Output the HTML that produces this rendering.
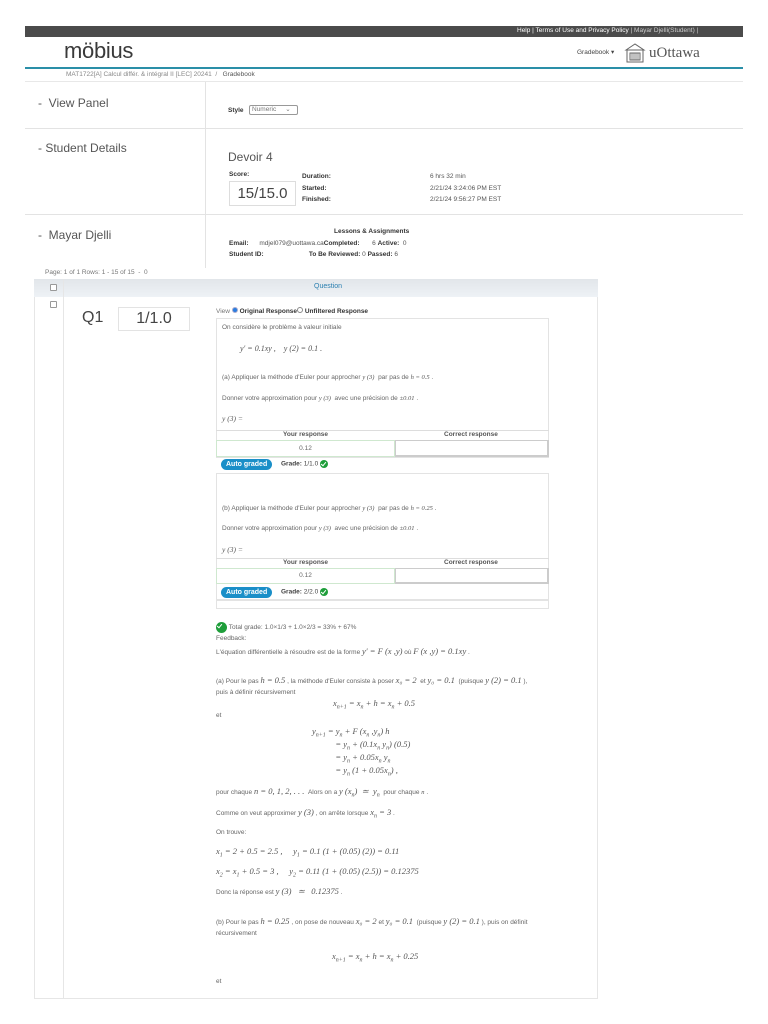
<!DOCTYPE html>
<html><head><meta charset="utf-8">
<style>
*{margin:0;padding:0;box-sizing:border-box}
body{width:768px;height:1024px;background:#fff;font-family:"Liberation Sans",sans-serif;color:#444;position:relative;overflow:hidden}
sub{line-height:0;font-size:70%}
.a{position:absolute;white-space:nowrap}
.s{font-size:6.5px;color:#555}
.b{font-weight:bold;color:#333}
.m{font-family:"Liberation Serif",serif;font-style:italic;color:#555}
.pill{position:absolute;background:#1a8fc8;color:#fff;font-size:7px;font-weight:bold;border-radius:6px;padding:1px 5px;height:11px;line-height:9px}
.chk{display:inline-block;width:8px;height:8px;border-radius:50%;background:#1e9e3a;vertical-align:middle;position:relative}
.chk:after{content:"";position:absolute;left:2.3px;top:1.2px;width:2px;height:4px;border:solid #fff;border-width:0 1.3px 1.3px 0;transform:rotate(40deg)}
.box{position:absolute;border:1px solid #e3e3e3}
.cb{position:absolute;width:7px;height:7px;border:1px solid #999;border-radius:1px;background:#fff}
</style></head><body>
<div class="a" style="left:25px;top:26px;width:718px;height:11px;background:#4b4b4b"></div>
<div class="a" style="left:517px;top:27px;font-size:6.5px;color:#fff">Help | Terms of Use and Privacy Policy <span style="color:#ccc">| Mayar Djelli(Student) |</span></div>
<div class="a" style="left:64px;top:38px;font-size:22px;color:#3a3a3a;letter-spacing:-0.3px">möbius</div>
<div class="a" style="left:577px;top:48px;font-size:6.5px;color:#444">Gradebook ▾</div>
<svg class="a" style="left:624px;top:42px" width="22" height="22" viewBox="0 0 22 22"><path d="M2 8 L11 2 L20 8 Z M3 8 H19 V20 H3 Z" fill="none" stroke="#666" stroke-width="1"/><rect x="6" y="11" width="10" height="7" fill="none" stroke="#666"/><path d="M8 11V18M10 11V18M12 11V18M14 11V18" stroke="#666" stroke-width=".8"/></svg>
<div class="a" style="left:649px;top:45px;font-size:15px;font-family:'Liberation Serif',serif;color:#555">uOttawa</div>
<div class="a" style="left:25px;top:67px;width:718px;height:2px;background:#2a8fa8"></div>
<div class="a s" style="left:66px;top:71px;color:#888">MAT1722[A] Calcul différ. &amp; intégral II [LEC] 20241 &nbsp;/ &nbsp; <span style="color:#555">Gradebook</span></div>
<div class="a" style="left:25px;top:81px;width:718px;height:1px;background:#e8e8e8"></div>
<div class="a" style="left:205px;top:82px;width:1px;height:186px;background:#e3e3e3"></div>
<div class="a" style="left:25px;top:128px;width:718px;height:1px;background:#e3e3e3"></div>
<div class="a" style="left:25px;top:214px;width:718px;height:1px;background:#e3e3e3"></div>
<div class="a" style="left:38px;top:96px;font-size:12px;color:#555">- &nbsp;View Panel</div>
<div class="a" style="left:38px;top:141px;font-size:12px;color:#555">- Student Details</div>
<div class="a" style="left:38px;top:228px;font-size:12px;color:#555">- &nbsp;Mayar Djelli</div>
<div class="a s b" style="left:228px;top:107px">Style</div>
<div class="a s" style="left:249px;top:105px;width:49px;height:10px;border:1px solid #999;border-radius:2px;padding-left:2px;line-height:8px;color:#777">Numeric &nbsp;&nbsp;&nbsp; ⌄</div>
<div class="a" style="left:228px;top:150px;font-size:12px;color:#555">Devoir 4</div>
<div class="a s b" style="left:229px;top:171px">Score:</div>
<div class="a" style="left:229px;top:181px;width:67px;height:25px;border:1px solid #ddd;font-size:15px;color:#444;text-align:center;line-height:23px">15/15.0</div>
<div class="a s b" style="left:302px;top:171px;line-height:11.5px">Duration:<br>Started:<br>Finished:</div>
<div class="a s" style="left:430px;top:171px;line-height:11.5px">6 hrs 32 min<br>2/21/24 3:24:06 PM EST<br>2/21/24 9:56:27 PM EST</div>
<div class="a s b" style="left:334px;top:228px">Lessons &amp; Assignments</div>
<div class="a s" style="left:229px;top:238px;line-height:11px"><b class="b">Email:</b> &nbsp;&nbsp;&nbsp;&nbsp; mdjel079@uottawa.ca<b class="b">Completed:</b> &nbsp;&nbsp;&nbsp;&nbsp;&nbsp;&nbsp;6 <b class="b">Active:</b> &nbsp;0<br><b class="b">Student ID:</b> &nbsp;&nbsp;&nbsp;&nbsp;&nbsp;&nbsp;&nbsp;&nbsp;&nbsp;&nbsp;&nbsp;&nbsp;&nbsp;&nbsp;&nbsp;&nbsp;&nbsp;&nbsp;&nbsp;&nbsp;&nbsp;&nbsp;&nbsp;&nbsp;<b class="b">To Be Reviewed:</b> 0 <b class="b">Passed:</b> 6</div>
<div class="a s" style="left:45px;top:269px;color:#777">Page: 1 of 1 Rows: 1 - 15 of 15 &nbsp;- &nbsp;0</div>
<div class="a" style="left:34px;top:279px;width:564px;height:720px;border:1px solid #e6e6e6;border-top:none"></div>
<div class="a" style="left:34px;top:279px;width:564px;height:18px;background:linear-gradient(#e2e6ea,#eef2f6)"></div>
<div class="a" style="left:63px;top:279px;width:1px;height:720px;background:#e6e6e6"></div>
<div class="a" style="left:314px;top:283px;font-size:7px;color:#2a7fb0">Question</div>
<div class="cb" style="left:50px;top:284px"></div>
<div class="cb" style="left:50px;top:301px"></div>
<div class="a" style="left:82px;top:309px;font-size:16px;color:#444">Q1</div>
<div class="a" style="left:118px;top:307px;width:72px;height:24px;border:1px solid #e3e3e3;font-size:16px;color:#444;text-align:center;line-height:22px">1/1.0</div>
<div class="a s" style="left:216px;top:307px;color:#777">View <span style="display:inline-block;width:6px;height:6px;border-radius:50%;background:#2a7de0;border:1px solid #aac"></span> <b class="b">Original Response</b><span style="display:inline-block;width:6px;height:6px;border-radius:50%;border:1px solid #888"></span> <b class="b">Unfiltered Response</b></div>
<div class="box" style="left:216px;top:318px;width:333px;height:140px"></div>
<div class="a s" style="left:222px;top:324px;color:#666">On considère le problème à valeur initiale</div>
<div class="a m" style="left:240px;top:344px;font-size:8px">y′ = 0.1xy , &nbsp;&nbsp; y (2) = 0.1 .</div>
<div class="a s" style="left:222px;top:374px;color:#666">(a) Appliquer la méthode d'Euler pour approcher <span class="m">y (3)</span> &nbsp;par pas de <span class="m">h = 0.5</span> .</div>
<div class="a s" style="left:222px;top:395px;color:#666">Donner votre approximation pour <span class="m">y (3)</span> &nbsp;avec une précision de <span class="m">±0.01</span> .</div>
<div class="a m" style="left:222px;top:414px;font-size:7.5px">y (3) =</div>
<div class="a" style="left:216px;top:430px;width:333px;height:1px;background:#ddd"></div>
<div class="a s b" style="left:283px;top:431px;color:#555">Your response</div>
<div class="a s b" style="left:444px;top:431px;color:#555">Correct response</div>
<div class="a" style="left:216px;top:440px;width:179px;height:17px;border:1px solid #cfe8cf;font-size:6.5px;text-align:center;line-height:15px;color:#666">0.12</div>
<div class="a" style="left:395px;top:440px;width:154px;height:17px;border:1px solid #ccc;border-width:1px 2px 2px 1px"></div>
<div class="pill" style="left:221px;top:459px">Auto graded</div>
<div class="a s b" style="left:281px;top:460px;color:#444">Grade: <span style="font-weight:normal">1/1.0</span> <span class="chk"></span></div>
<div class="box" style="left:216px;top:473px;width:333px;height:127px"></div>
<div class="a s" style="left:222px;top:505px;color:#666">(b) Appliquer la méthode d'Euler pour approcher <span class="m">y (3)</span> &nbsp;par pas de <span class="m">h = 0.25</span> .</div>
<div class="a s" style="left:222px;top:525px;color:#666">Donner votre approximation pour <span class="m">y (3)</span> &nbsp;avec une précision de <span class="m">±0.01</span> .</div>
<div class="a m" style="left:222px;top:545px;font-size:7.5px">y (3) =</div>
<div class="a" style="left:216px;top:558px;width:333px;height:1px;background:#ddd"></div>
<div class="a s b" style="left:283px;top:559px;color:#555">Your response</div>
<div class="a s b" style="left:444px;top:559px;color:#555">Correct response</div>
<div class="a" style="left:216px;top:568px;width:179px;height:16px;border:1px solid #cfe8cf;font-size:6.5px;text-align:center;line-height:14px;color:#666">0.12</div>
<div class="a" style="left:395px;top:568px;width:154px;height:16px;border:1px solid #ccc;border-width:1px 2px 2px 1px"></div>
<div class="pill" style="left:221px;top:587px">Auto graded</div>
<div class="a s b" style="left:281px;top:588px;color:#444">Grade: <span style="font-weight:normal">2/2.0</span> <span class="chk"></span></div>
<div class="box" style="left:216px;top:600px;width:333px;height:9px"></div>
<div class="a s" style="left:216px;top:622px;color:#666"><span class="chk" style="width:11px;height:11px"></span> Total grade: 1.0×1/3 + 1.0×2/3 = 33% + 67%</div>
<div class="a s" style="left:216px;top:635px;color:#666">Feedback:</div>
<div class="a s" style="left:216px;top:646px;color:#666">L'équation différentielle à résoudre est de la forme <span class="m" style="font-size:8.5px">y′ = F (x ,y)</span> où <span class="m" style="font-size:8.5px">F (x ,y) = 0.1xy</span> .</div>
<div class="a s" style="left:216px;top:675px;color:#666;line-height:11px">(a) Pour le pas <span class="m" style="font-size:8.5px">h = 0.5</span> , la méthode d'Euler consiste à poser <span class="m" style="font-size:8.5px">x₀ = 2</span> &nbsp;et <span class="m" style="font-size:8.5px">y₀ = 0.1</span> &nbsp;(puisque <span class="m" style="font-size:8.5px">y (2) = 0.1</span> ),<br>puis à définir récursivement</div>
<div class="a m" style="left:333px;top:698px;font-size:8.5px">x<sub>n+1</sub> = x<sub>n</sub> + h = x<sub>n</sub> + 0.5</div>
<div class="a s" style="left:216px;top:712px;color:#666">et</div>
<div class="a m" style="left:312px;top:725px;font-size:8.5px;line-height:13px">y<sub>n+1</sub> = y<sub>n</sub> + F (x<sub>n</sub> ,y<sub>n</sub>) h<br>&nbsp;&nbsp;&nbsp;&nbsp;&nbsp;&nbsp;&nbsp;&nbsp;&nbsp;&nbsp; = y<sub>n</sub> + (0.1x<sub>n</sub> y<sub>n</sub>) (0.5)<br>&nbsp;&nbsp;&nbsp;&nbsp;&nbsp;&nbsp;&nbsp;&nbsp;&nbsp;&nbsp; = y<sub>n</sub> + 0.05x<sub>n</sub> y<sub>n</sub><br>&nbsp;&nbsp;&nbsp;&nbsp;&nbsp;&nbsp;&nbsp;&nbsp;&nbsp;&nbsp; = y<sub>n</sub> (1 + 0.05x<sub>n</sub>) ,</div>
<div class="a s" style="left:216px;top:786px;color:#666">pour chaque <span class="m" style="font-size:8.5px">n = 0, 1, 2, . . .</span> &nbsp;Alors on a <span class="m" style="font-size:8.5px">y (x<sub>n</sub>) &nbsp;≃ &nbsp;y<sub>n</sub></span> &nbsp;pour chaque <span class="m">n</span> .</div>
<div class="a s" style="left:216px;top:807px;color:#666">Comme on veut approximer <span class="m" style="font-size:8.5px">y (3)</span> , on arrête lorsque <span class="m" style="font-size:8.5px">x<sub>n</sub> = 3</span> .</div>
<div class="a s" style="left:216px;top:829px;color:#666">On trouve:</div>
<div class="a m" style="left:216px;top:846px;font-size:8.5px">x<sub>1</sub> = 2 + 0.5 = 2.5 , &nbsp;&nbsp;&nbsp; y<sub>1</sub> = 0.1 (1 + (0.05) (2)) = 0.11</div>
<div class="a m" style="left:216px;top:866px;font-size:8.5px">x<sub>2</sub> = x<sub>1</sub> + 0.5 = 3 , &nbsp;&nbsp;&nbsp; y<sub>2</sub> = 0.11 (1 + (0.05) (2.5)) = 0.12375</div>
<div class="a s" style="left:216px;top:886px;color:#666">Donc la réponse est <span class="m" style="font-size:8.5px">y (3) &nbsp; ≃ &nbsp; 0.12375</span> .</div>
<div class="a s" style="left:216px;top:916px;color:#666;line-height:11px">(b) Pour le pas <span class="m" style="font-size:8.5px">h = 0.25</span> , on pose de nouveau <span class="m" style="font-size:8.5px">x₀ = 2</span> et <span class="m" style="font-size:8.5px">y₀ = 0.1</span> &nbsp;(puisque <span class="m" style="font-size:8.5px">y (2) = 0.1</span> ), puis on définit<br>récursivement</div>
<div class="a m" style="left:332px;top:951px;font-size:8.5px">x<sub>n+1</sub> = x<sub>n</sub> + h = x<sub>n</sub> + 0.25</div>
<div class="a s" style="left:216px;top:978px;color:#666">et</div>
</body></html>
